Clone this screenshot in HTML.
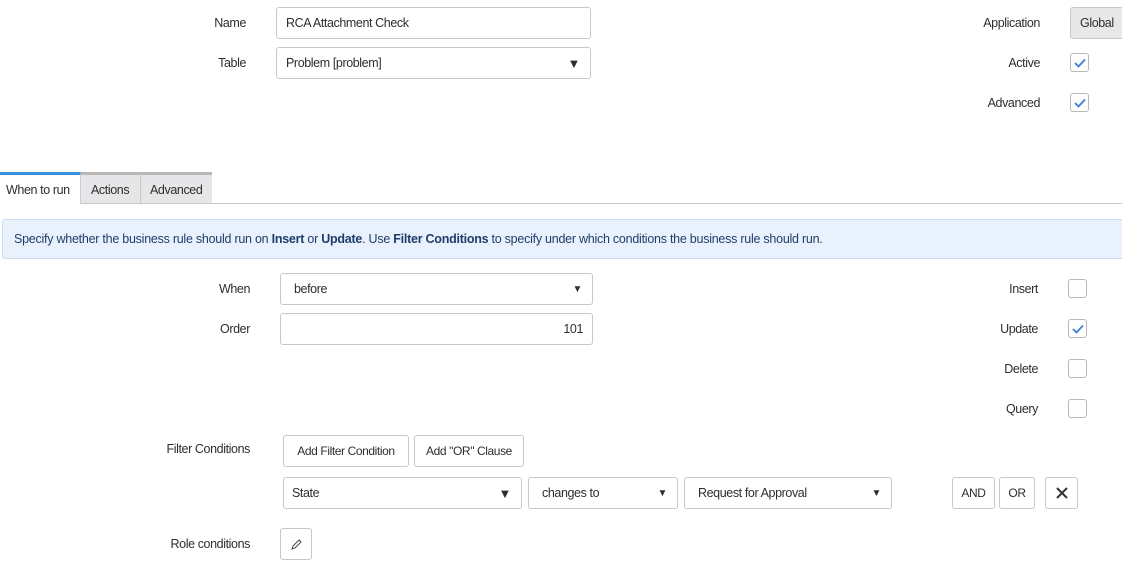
<!DOCTYPE html>
<html><head><meta charset="utf-8"><style>
*{box-sizing:border-box;margin:0;padding:0}
body{width:1122px;height:569px;background:#fff;font-family:"Liberation Sans",sans-serif;font-size:12.5px;letter-spacing:-0.4px;color:#2e2e2e;position:relative;overflow:hidden;white-space:nowrap}
.a{position:absolute}
.lbl{position:absolute;text-align:right;margin-top:1px}
.inp{position:absolute;border:1px solid #c8c8c8;border-radius:3px;background:#fff;padding:0 9px;display:flex;align-items:center}
.cb{position:absolute;width:19px;height:19px;border:1px solid #b8b8b8;border-radius:3px;background:#fff}
.cb svg{position:absolute;left:3px;top:4px}
.btn{position:absolute;border:1px solid #c8c8c8;border-radius:3px;background:#fff;display:flex;align-items:center;justify-content:center;font-size:12px}
.arr{position:absolute;right:10px;font-size:10px}
</style></head><body>
<div class="lbl" style="left:150px;top:15px;width:96px">Name</div>
<div class="inp" style="left:276px;top:7px;width:315px;height:32px">RCA Attachment Check</div>
<div class="lbl" style="left:150px;top:55px;width:96px">Table</div>
<div class="inp" style="left:276px;top:47px;width:315px;height:32px">Problem [problem]<span class="arr" style="font-size:13px">▼</span></div>
<div class="lbl" style="left:940px;top:15px;width:100px">Application</div>
<div class="a" style="left:1070px;top:7px;width:60px;height:32px;background:#e8e8e8;border:1px solid #c8c8c8;border-radius:3px;padding:8px 9px">Global</div>
<div class="lbl" style="left:940px;top:55px;width:100px">Active</div>
<div class="cb" style="left:1070px;top:53px"><svg width="12" height="10"><path d="M1 5l3.5 3.5L11 1.5" stroke="#3f7ccf" stroke-width="1.8" fill="none"/></svg></div>
<div class="lbl" style="left:940px;top:95px;width:100px">Advanced</div>
<div class="cb" style="left:1070px;top:93px"><svg width="12" height="10"><path d="M1 5l3.5 3.5L11 1.5" stroke="#3f7ccf" stroke-width="1.8" fill="none"/></svg></div>

<div class="a" style="left:0;top:203px;width:1122px;height:1px;background:#c8c8c8"></div>
<div class="a" style="left:0;top:172px;width:81px;height:32px;background:#fff;border-top:3px solid #3b8de0;border-right:1px solid #c0d0e0;padding:8px 6px">When to run</div>
<div class="a" style="left:81px;top:172px;width:60px;height:31px;background:#e6e6e8;border-top:3px solid #b8b8b8;border-right:1px solid #c8c8c8;padding:8px 10px">Actions</div>
<div class="a" style="left:141px;top:172px;width:71px;height:31px;background:#e6e6e8;border-top:3px solid #b8b8b8;padding:8px 9px">Advanced</div>

<div class="a" style="left:2px;top:219px;width:1130px;height:40px;background:#e9f2fc;border:1px solid #c9dcf1;border-radius:3px;padding:12px 11px;color:#1f3d6b;font-size:12.5px;letter-spacing:-0.25px">Specify whether the business rule should run on <b style="font-weight:600">Insert</b> or <b style="font-weight:600">Update</b>. Use <b style="font-weight:600">Filter Conditions</b> to specify under which conditions the business rule should run.</div>

<div class="lbl" style="left:150px;top:281px;width:100px">When</div>
<div class="inp" style="left:280px;top:273px;width:313px;height:32px;padding-left:13px">before<span class="arr">▼</span></div>
<div class="lbl" style="left:150px;top:321px;width:100px">Order</div>
<div class="inp" style="left:280px;top:313px;width:313px;height:32px;justify-content:flex-end">101</div>

<div class="lbl" style="left:940px;top:281px;width:98px">Insert</div>
<div class="cb" style="left:1068px;top:279px"></div>
<div class="lbl" style="left:940px;top:321px;width:98px">Update</div>
<div class="cb" style="left:1068px;top:319px"><svg width="12" height="10"><path d="M1 5l3.5 3.5L11 1.5" stroke="#3f7ccf" stroke-width="1.8" fill="none"/></svg></div>
<div class="lbl" style="left:940px;top:361px;width:98px">Delete</div>
<div class="cb" style="left:1068px;top:359px"></div>
<div class="lbl" style="left:940px;top:401px;width:98px">Query</div>
<div class="cb" style="left:1068px;top:399px"></div>

<div class="lbl" style="left:100px;top:441px;width:150px">Filter Conditions</div>
<div class="btn" style="left:283px;top:435px;width:126px;height:32px">Add Filter Condition</div>
<div class="btn" style="left:414px;top:435px;width:110px;height:32px">Add "OR" Clause</div>
<div class="inp" style="left:283px;top:477px;width:239px;height:32px;padding-left:8px">State<span class="arr" style="font-size:13px">▼</span></div>
<div class="inp" style="left:528px;top:477px;width:150px;height:32px;padding-left:13px">changes to<span class="arr">▼</span></div>
<div class="inp" style="left:684px;top:477px;width:208px;height:32px;padding-left:13px">Request for Approval<span class="arr">▼</span></div>
<div class="btn" style="left:952px;top:477px;width:43px;height:32px">AND</div>
<div class="btn" style="left:999px;top:477px;width:36px;height:32px">OR</div>
<div class="btn" style="left:1045px;top:477px;width:33px;height:32px"><svg width="12" height="12"><path d="M1 1l10 10M11 1L1 11" stroke="#333" stroke-width="2"/></svg></div>

<div class="lbl" style="left:100px;top:536px;width:150px">Role conditions</div>
<div class="btn" style="left:280px;top:528px;width:32px;height:32px"><svg width="12" height="12"><path d="M2 11l1-3 6-6 2 2-6 6z" stroke="#444" fill="none" stroke-width="1"/></svg></div>
</body></html>
